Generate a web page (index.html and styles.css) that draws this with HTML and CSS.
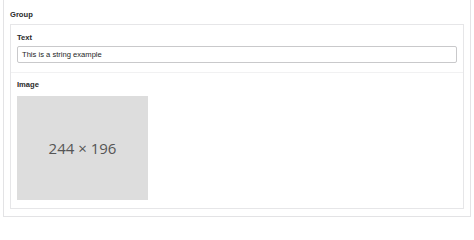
FILE: index.html
```html
<!DOCTYPE html>
<html>
<head>
<meta charset="utf-8">
<link rel="stylesheet" href="styles.css">
</head>
<body>
<div class="page">
  <div class="group">
    <div class="group-label">Group</div>
    <div class="fields">
      <div class="field field-text">
        <div class="label">Text</div>
        <div class="input">This is a string example</div>
      </div>
      <div class="field field-image">
        <div class="label">Image</div>
        <div class="placeholder">244 × 196</div>
      </div>
    </div>
  </div>
</div>
</body>
</html>
```
FILE: styles.css
```css
html, body {
  margin: 0;
  padding: 0;
  background: #ffffff;
}
body {
  font-family: "Liberation Sans", Arial, sans-serif;
  font-size: 7.6px;
  color: #1e1e1e;
}
.page {
  padding: 0 3px 0 3px;
  height: 221px;
  box-sizing: border-box;
}
.group {
  border: 1px solid #e3e3e5;
  border-top: none;
  padding: 10px 6px 7px 6px;
}
.group-label {
  font-weight: bold;
  line-height: 10px;
  height: 10px;
  margin-bottom: 4px;
  color: #2a2a2a;
}
.fields {
  border: 1px solid #e6e6e8;
}
.field {
  padding: 0 6px;
}
.field-text {
  padding-top: 8px;
  padding-bottom: 9px;
  border-bottom: 1px solid #f1f1f2;
}
.field-image {
  padding-top: 7px;
  padding-bottom: 8px;
}
.label {
  font-weight: bold;
  line-height: 10px;
  height: 10px;
  color: #2a2a2a;
}
.field-text .label {
  margin-bottom: 3px;
}
.field-image .label {
  margin-bottom: 6px;
}
.input {
  height: 17px;
  box-sizing: border-box;
  border: 1px solid #c9c9cb;
  border-radius: 2px;
  padding: 0 4px;
  line-height: 15px;
  color: #1e1e1e;
}
.placeholder {
  width: 131px;
  height: 104px;
  background: #dddddd;
  color: #555555;
  font-family: "Open Sans", sans-serif;
  font-size: 15px;
  display: flex;
  align-items: center;
  justify-content: center;
}
```
